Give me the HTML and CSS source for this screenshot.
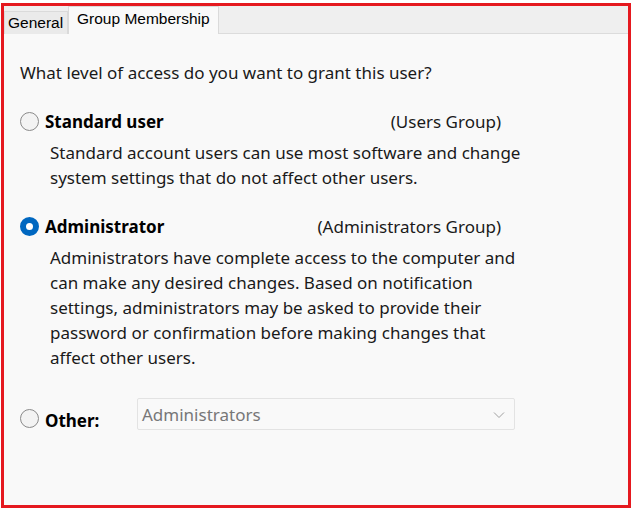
FILE: index.html
```html
<!DOCTYPE html>
<html>
<head>
<meta charset="utf-8">
<link rel="stylesheet" href="styles.css">
</head>
<body>
<div class="frame">
  <div class="tabs">
    <div class="tab tab-inactive">General</div>
    <div class="tab tab-active">Group Membership</div>
  </div>
  <div class="panel">
    <p class="question">What level of access do you want to grant this user?</p>

    <div class="option">
      <div class="option-head">
        <span class="radio"></span>
        <span class="label">Standard user</span>
        <span class="group">(Users Group)</span>
      </div>
      <p class="desc">Standard account users can use most software and change system settings that do not affect other users.</p>
    </div>

    <div class="option option-admin">
      <div class="option-head">
        <span class="radio radio-on"></span>
        <span class="label">Administrator</span>
        <span class="group">(Administrators Group)</span>
      </div>
      <p class="desc">Administrators have complete access to the computer and can make any desired changes. Based on notification settings, administrators may be asked to provide their password or confirmation before making changes that affect other users.</p>
    </div>

    <div class="other">
      <span class="radio"></span>
      <span class="label label-other">Other:</span>
      <div class="combo">
        <span class="combo-text">Administrators</span>
        <svg class="chev" width="12" height="8" viewBox="0 0 12 8"><path d="M1 1.5 L6 6.5 L11 1.5" fill="none" stroke="#a0a0a0" stroke-width="1"/></svg>
      </div>
    </div>
  </div>
</div>
</body>
</html>
```

FILE: styles.css
```css
html, body {
  margin: 0;
  padding: 0;
  background: #ffffff;
}

.frame {
  margin: 3px 0 0 1px;
  width: 630px;
  height: 505px;
  box-sizing: border-box;
  border: 3px solid #e5191f;
  background: #f9f9f9;
  display: flex;
  flex-direction: column;
  font-family: "Noto Sans", "Open Sans", sans-serif;
  color: #1a1a1a;
}

.tabs {
  height: 27px;
  background: #efefef;
  border-bottom: 1px solid #dcdcdc;
  display: flex;
  align-items: flex-end;
  font-family: "Liberation Sans", Arial, sans-serif;
  font-size: 15.5px;
  color: #000;
}

.tab {
  box-sizing: border-box;
}

.tab-inactive {
  width: 64px;
  height: 23px;
  padding-left: 3px;
  line-height: 22px;
  background: #eaeaea;
  border: 1px solid #dadada;
  border-bottom: none;
  margin-bottom: -1px;
}

.tab-active {
  height: 28px;
  width: 151px;
  padding-left: 8px;
  line-height: 24px;
  background: #f9f9f9;
  border: 1px solid #dadada;
  border-bottom: none;
  margin-bottom: -1px;
}

.panel {
  padding: 26px 0 0 16px;
  font-size: 17px;
  line-height: 25px;
}

.question {
  margin: 0;
}

.option {
  margin-top: 24px;
  width: 481px;
}

.option-head {
  display: flex;
  align-items: center;
  height: 24px;
}

.radio {
  width: 19px;
  height: 19px;
  box-sizing: border-box;
  border-radius: 50%;
  border: 1px solid #8a8a8a;
  background: #f3f3f3;
  margin-right: 6px;
  flex: none;
}

.radio-on {
  border: 6px solid #0067c0;
  background: #ffffff;
}

.label {
  font-weight: bold;
  color: #000;
}

.group {
  margin-left: auto;
}

.desc {
  margin: 7px 0 0 30px;
  width: 478px;
}

.other {
  margin-top: 34px;
  display: flex;
  align-items: center;
}

.label-other {
  width: 92px;
  flex: none;
  padding-top: 4px;
}

.combo {
  width: 378px;
  height: 32px;
  box-sizing: border-box;
  border: 1px solid #e3e3e3;
  border-radius: 2px;
  background: #f9f9f9;
  display: flex;
  align-items: center;
  padding: 0 9px 0 4px;
  margin-top: -9px;
}

.combo-text {
  color: #777;
  flex: 1;
  margin-top: 1px;
}

.chev {
  display: block;
  margin-top: 1px;
}
```
